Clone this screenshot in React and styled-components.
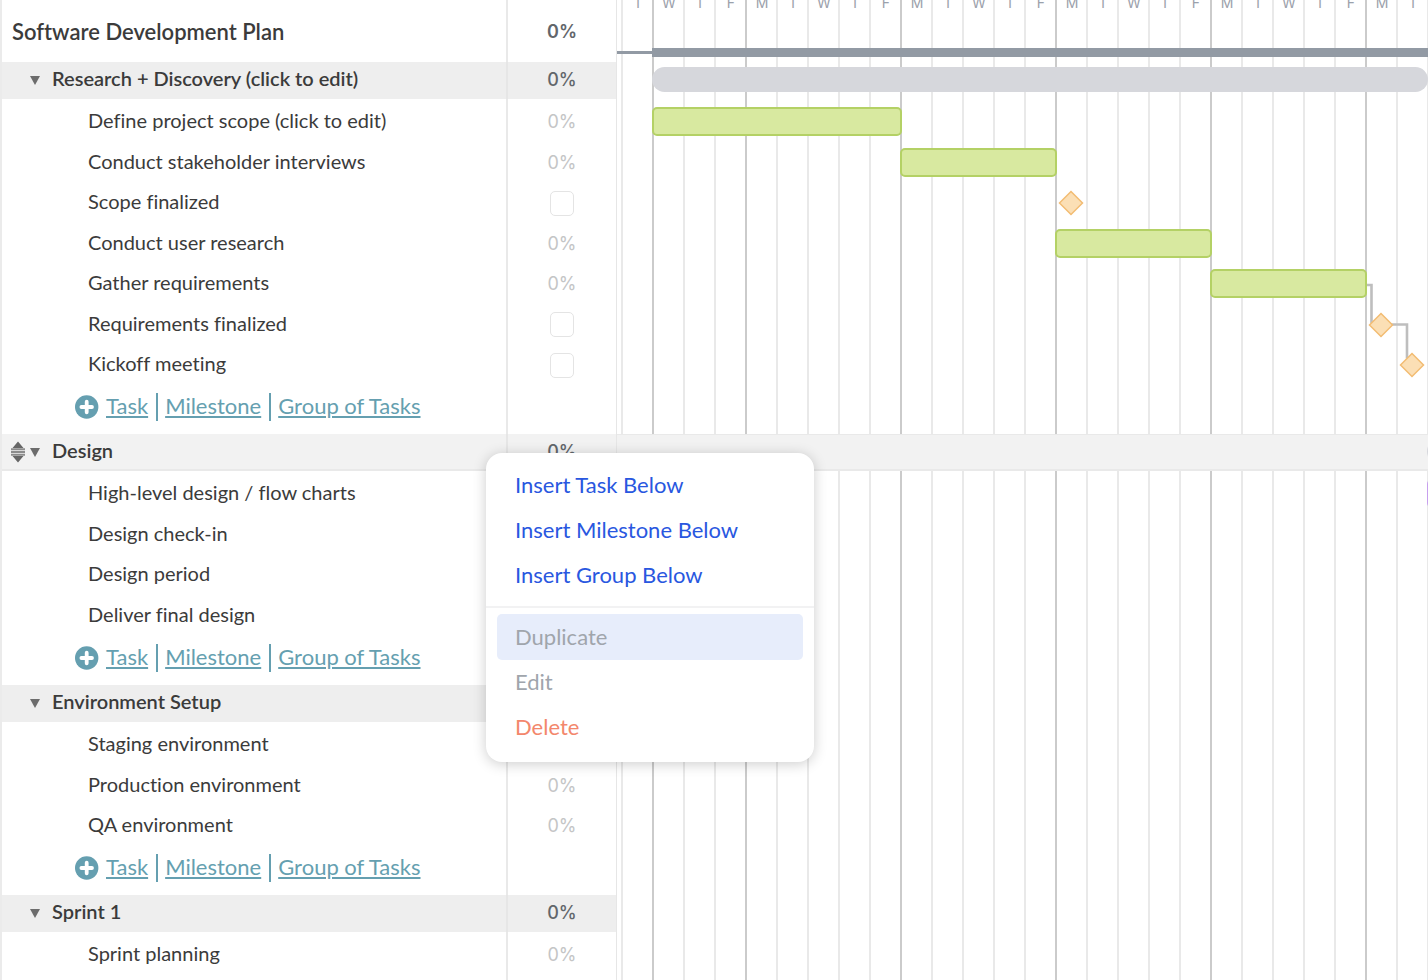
import React from 'react';
import styled, { createGlobalStyle, css } from 'styled-components';

const DAY = 31;

const days = ['T', 'W', 'T', 'F'].concat(
  ...Array.from({ length: 5 }, () => ['M', 'T', 'W', 'T', 'F'])
);

const groups = [
  {
    name: 'Research + Discovery (click to edit)',
    bar: { start: 1, span: 25 },
    items: [
      { name: 'Define project scope (click to edit)', bar: { start: 1, span: 8 } },
      { name: 'Conduct stakeholder interviews', bar: { start: 9, span: 5 } },
      { name: 'Scope finalized', milestone: 14 },
      { name: 'Conduct user research', bar: { start: 14, span: 5 } },
      { name: 'Gather requirements', bar: { start: 19, span: 5 } },
      { name: 'Requirements finalized', milestone: 24 },
      { name: 'Kickoff meeting', milestone: 25 },
    ],
  },
  {
    name: 'Design',
    active: true,
    bar: { start: 26, span: 2 },
    items: [
      { name: 'High-level design / flow charts', bar: { start: 26, span: 2, purple: true } },
      { name: 'Design check-in' },
      { name: 'Design period' },
      { name: 'Deliver final design' },
    ],
  },
  {
    name: 'Environment Setup',
    items: [
      { name: 'Staging environment' },
      { name: 'Production environment' },
      { name: 'QA environment' },
    ],
  },
  {
    name: 'Sprint 1',
    items: [{ name: 'Sprint planning' }],
    last: true,
  },
];

const ContextMenu = () => (
  <Menu role="menu">
    <MenuItem role="menuitem">Insert Task Below</MenuItem>
    <MenuItem role="menuitem">Insert Milestone Below</MenuItem>
    <MenuItem role="menuitem">Insert Group Below</MenuItem>
    <MenuDivider />
    <MenuItem role="menuitem" $tone="muted" $selected>Duplicate</MenuItem>
    <MenuItem role="menuitem" $tone="muted">Edit</MenuItem>
    <MenuItem role="menuitem" $tone="danger">Delete</MenuItem>
  </Menu>
);

const DragHandle = () => (
  <svg width="14" height="22" viewBox="0 0 14 22" aria-hidden="true">
    <path d="M7 0.500 12.500 7H1.500z M7 21.500 1.500 15h11z" fill="#666" />
    <path d="M0 8.200h14M0 11h14M0 13.800h14" stroke="#8c8c8c" strokeWidth="2" />
  </svg>
);

const PlusIcon = () => (
  <svg width="24" height="24" viewBox="0 0 24 24" aria-hidden="true">
    <circle cx="11.7" cy="12" r="11.7" fill="#659fb0" />
    <path d="M11.700 6.700v10.600M6.400 12h10.600" stroke="#fff" strokeWidth="3.8" strokeLinecap="round" />
  </svg>
);

const GroupRows = ({ group }) => (
  <tbody>
    <GroupRow $active={group.active}>
      <GroupName>
        <HandleSlot>{group.active && <DragHandle />}</HandleSlot>
        <Toggle aria-label={`Collapse ${group.name}`}>
          <svg width="10" height="9" viewBox="0 0 10 9" aria-hidden="true">
            <path d="M0 0h10L5 9z" fill="#6c6c6c" />
          </svg>
        </Toggle>
        <GroupLabel>{group.name}</GroupLabel>
        {group.active && <ContextMenu />}
      </GroupName>
      <Percent $strong>0%</Percent>
    </GroupRow>
    {group.items.map((item) => (
      <TaskRow key={item.name}>
        <TaskName>{item.name}</TaskName>
        <Percent>
          {item.milestone ? <Check aria-label={`${item.name} done`} /> : '0%'}
        </Percent>
      </TaskRow>
    ))}
    {!group.last && (
      <AddRow>
        <AddCell>
          <PlusIcon />
          <AddLink href="#task">Task</AddLink>
          <AddDivider />
          <AddLink href="#milestone">Milestone</AddLink>
          <AddDivider />
          <AddLink href="#group">Group of Tasks</AddLink>
        </AddCell>
        <Percent />
      </AddRow>
    )}
  </tbody>
);

const GroupTrack = ({ group }) => (
  <div>
    <GroupLane $active={group.active}>
      {group.bar && <GroupBar $start={group.bar.start} $span={group.bar.span} />}
    </GroupLane>
    {group.items.map((item) => (
      <TaskLane key={item.name}>
        {item.bar && (
          <TaskBar $start={item.bar.start} $span={item.bar.span} $purple={item.bar.purple} />
        )}
        {item.milestone && (
          <Diamond $start={item.milestone} width="26" height="26" viewBox="0 0 26 26">
            <path d="M13 1.5 24.5 13 13 24.5 1.5 13z" fill="#fbdfb5" stroke="#f2bc73" strokeWidth="1.5" />
          </Diamond>
        )}
      </TaskLane>
    ))}
    {!group.last && <AddLane />}
  </div>
);

const App = () => (
  <Page>
    <GlobalStyle />
    <Sidebar>
      <thead>
        <TitleRow>
          <Title>Software Development Plan</Title>
          <Percent as="th" $strong $bold>0%</Percent>
        </TitleRow>
      </thead>
      {groups.map((group) => (
        <GroupRows key={group.name} group={group} />
      ))}
    </Sidebar>
    <Timeline>
      <DayGrid>
        {days.map((day, i) => (
          <Day key={i} $strong={i === 1 || i % 5 === 4}>
            <DayLabel>{day}</DayLabel>
          </Day>
        ))}
      </DayGrid>
      <Connectors aria-hidden="true">
        <path d="M748 285h6.500v38M770 324.500h20v34" fill="none" stroke="#bebebe" strokeWidth="2.6" />
      </Connectors>
      <Tracks>
        <SummaryLane>
          <SummaryLead />
          <SummaryBar />
        </SummaryLane>
        {groups.map((group) => (
          <GroupTrack key={group.name} group={group} />
        ))}
      </Tracks>
    </Timeline>
  </Page>
);

const GlobalStyle = createGlobalStyle`
  * {
    box-sizing: border-box;
  }

  body {
    margin: 0;
    background: #fff;
    color: #3b3b3b;
    font-family: Lato, 'Liberation Sans', sans-serif;
    font-size: 20px;
    font-variant-ligatures: no-common-ligatures;
    line-height: 24px;
    overflow: hidden;
  }

  button {
    font: inherit;
    font-variant-ligatures: inherit;
    border: 0;
    padding: 0;
    background: none;
    cursor: pointer;
  }
`;

const Page = styled.main`
  display: grid;
  grid-template-columns: 617px minmax(0, 1fr);
  height: 100vh;
  overflow: hidden;
`;

/* The two panes share these heights so that bars line up with their names. */
const taskHeight = css`
  height: 41px;

  &:nth-child(even) {
    height: 40px;
  }

  &:nth-child(2) {
    height: 42px;
    padding-top: 2px;
  }
`;

const Sidebar = styled.table`
  display: block;
  position: relative;
  z-index: 1;
  border-left: 2px solid #ebebeb;
  border-right: 1px solid #e6e6e6;
  background: linear-gradient(#e9e9e9, #e9e9e9) right 108px top / 2px 100% no-repeat;

  thead,
  tbody {
    display: block;
  }
`;

const Row = styled.tr`
  display: grid;
  grid-template-columns: minmax(0, 1fr) 110px;
`;

const TitleRow = styled(Row)`
  height: 62px;
`;

const GroupRow = styled(Row)`
  position: relative;
  height: 37px;
  background:
    linear-gradient(#e6e6e6, #e6e6e6) right 108px top / 2px 100% no-repeat,
    ${({ $active }) => ($active ? '#f2f2f2' : '#eee')};
  ${({ $active }) => $active && 'box-shadow: inset 0 -2px #e9e9e9;'}
`;

const TaskRow = styled(Row)`
  ${taskHeight}
`;

const AddRow = styled(Row)`
  height: 50px;
`;

const Cell = styled.td`
  display: flex;
  align-items: center;
  padding: 0;
`;

const Title = styled(Cell).attrs({ as: 'th' })`
  padding-left: 10px;
  padding-top: 2px;
  font-size: 22px;
  font-weight: 600;
`;

const GroupName = styled(Cell)`
  padding: 0 0 1px 9px;
  font-weight: 600;
`;

const GroupLabel = styled.span`
  padding-bottom: 4px;
`;

const HandleSlot = styled.span`
  display: flex;
  width: 14px;
  margin-right: 5px;
`;

const Toggle = styled.button`
  display: flex;
  margin-right: 12px;
`;

const TaskName = styled(Cell)`
  padding-left: 86px;
  padding-bottom: 2px;
`;

const Percent = styled(Cell)`
  justify-content: center;
  padding: 2px 0 0 2px;
  font-family: Inter, 'Liberation Sans', sans-serif;
  font-size: 18px;
  font-weight: ${({ $strong, $bold }) => ($bold ? 600 : $strong ? 500 : 400)};
  color: ${({ $strong }) => ($strong ? '#62666b' : '#c4c5c6')};

  ${GroupRow} & {
    padding-top: 0;
    padding-bottom: 2px;
  }
`;

const Check = styled.input.attrs({ type: 'checkbox' })`
  appearance: none;
  width: 24px;
  height: 25px;
  margin: 0;
  border: 1px solid #e4e4e4;
  border-radius: 5px;
  background: #fff;
`;

const AddCell = styled(Cell)`
  padding: 0 0 4px 73px;
  color: #659fb0;
  font-size: 22px;

  svg {
    margin-right: 7px;
  }
`;

const AddLink = styled.a`
  padding-bottom: 2px;
  color: inherit;
  text-decoration-thickness: 2px;
  text-underline-offset: 2px;
`;

const AddDivider = styled.span`
  width: 2px;
  height: 28px;
  margin: 0 7px 0 8px;
  background: #659fb0;
`;

const Menu = styled.div`
  position: absolute;
  top: 19px;
  left: 484px;
  z-index: 2;
  width: 328px;
  padding: 10px 11px 12px;
  border-radius: 16px;
  background: #fff;
  box-shadow: 0 2px 14px rgba(0, 0, 0, 0.2);
`;

const tones = {
  muted: '#a0a5ac',
  danger: '#f3876c',
};

const MenuItem = styled.button`
  display: block;
  width: 100%;
  height: ${({ $selected }) => ($selected ? 46 : 45)}px;
  padding: 0 0 1px 18px;
  border-radius: 5px;
  background: ${({ $selected }) => ($selected ? '#e7edfb' : 'none')};
  color: ${({ $tone }) => tones[$tone] || '#2957e0'};
  font-size: 22px;
  font-weight: 400;
  text-align: left;
`;

const MenuDivider = styled.hr`
  height: 2px;
  margin: 8px -11px 6px;
  border: 0;
  background: #f2f2f3;
`;

const Timeline = styled.section`
  display: grid;
  grid-template: minmax(0, 1fr) / minmax(0, 1fr);
  overflow: hidden;

  & > * {
    grid-area: 1 / 1;
  }
`;

const DayGrid = styled.div`
  display: flex;
  padding-left: 4px;
`;

const Day = styled.div`
  flex: 0 0 ${DAY}px;
  border-left: 2px solid ${({ $strong }) => ($strong ? '#cbcbcb' : '#e9e9e9')};
`;

const DayLabel = styled.div`
  margin-top: -6px;
  padding-left: 1px;
  color: #9ba1ab;
  font-family: Inter, 'Liberation Sans', sans-serif;
  font-size: 14px;
  line-height: 18px;
  text-align: center;
`;

const Connectors = styled.svg`
  width: 100%;
  height: 100%;
`;

const Tracks = styled.div`
  min-width: 0;
`;

const SummaryLane = styled.div`
  display: flex;
  align-items: center;
  height: 62px;
  padding-top: 43px;
`;

const SummaryLead = styled.div`
  width: 35px;
  height: 3px;
  background: #929aa4;
`;

const SummaryBar = styled.div`
  flex: 1;
  height: 9px;
  background: #929aa4;
`;

const Lane = styled.div`
  display: grid;
  grid-template-columns: repeat(${days.length}, ${DAY}px);
  align-items: center;
  padding-left: 4px;
`;

const GroupLane = styled(Lane)`
  height: 37px;
  padding-bottom: 2px;
  ${({ $active }) =>
    $active &&
    css`
      background: #f2f2f2;
      box-shadow: inset 0 1px #e9e9e9, inset 0 -2px #e9e9e9;
    `}
`;

const TaskLane = styled(Lane)`
  ${taskHeight}
`;

const AddLane = styled(Lane)`
  height: 50px;
`;

const GroupBar = styled.div`
  grid-column: ${({ $start, $span }) => `${$start + 1} / span ${$span}`};
  height: 25px;
  margin-right: -1px;
  border-radius: 13px;
  background: #d6d7dc;
`;

const TaskBar = styled.div`
  grid-column: ${({ $start, $span }) => `${$start + 1} / span ${$span}`};
  height: 29px;
  margin-top: 1px;
  margin-right: -2px;
  border: 2px solid ${({ $purple }) => ($purple ? '#c79fee' : '#b4d165')};
  border-radius: 5px;
  background: ${({ $purple }) => ($purple ? '#e3cdf0' : '#d8e9a0')};
`;

const Diamond = styled.svg`
  grid-column: ${({ $start }) => $start + 1};
  justify-self: center;
  margin-top: 2px;
`;

export default App;
